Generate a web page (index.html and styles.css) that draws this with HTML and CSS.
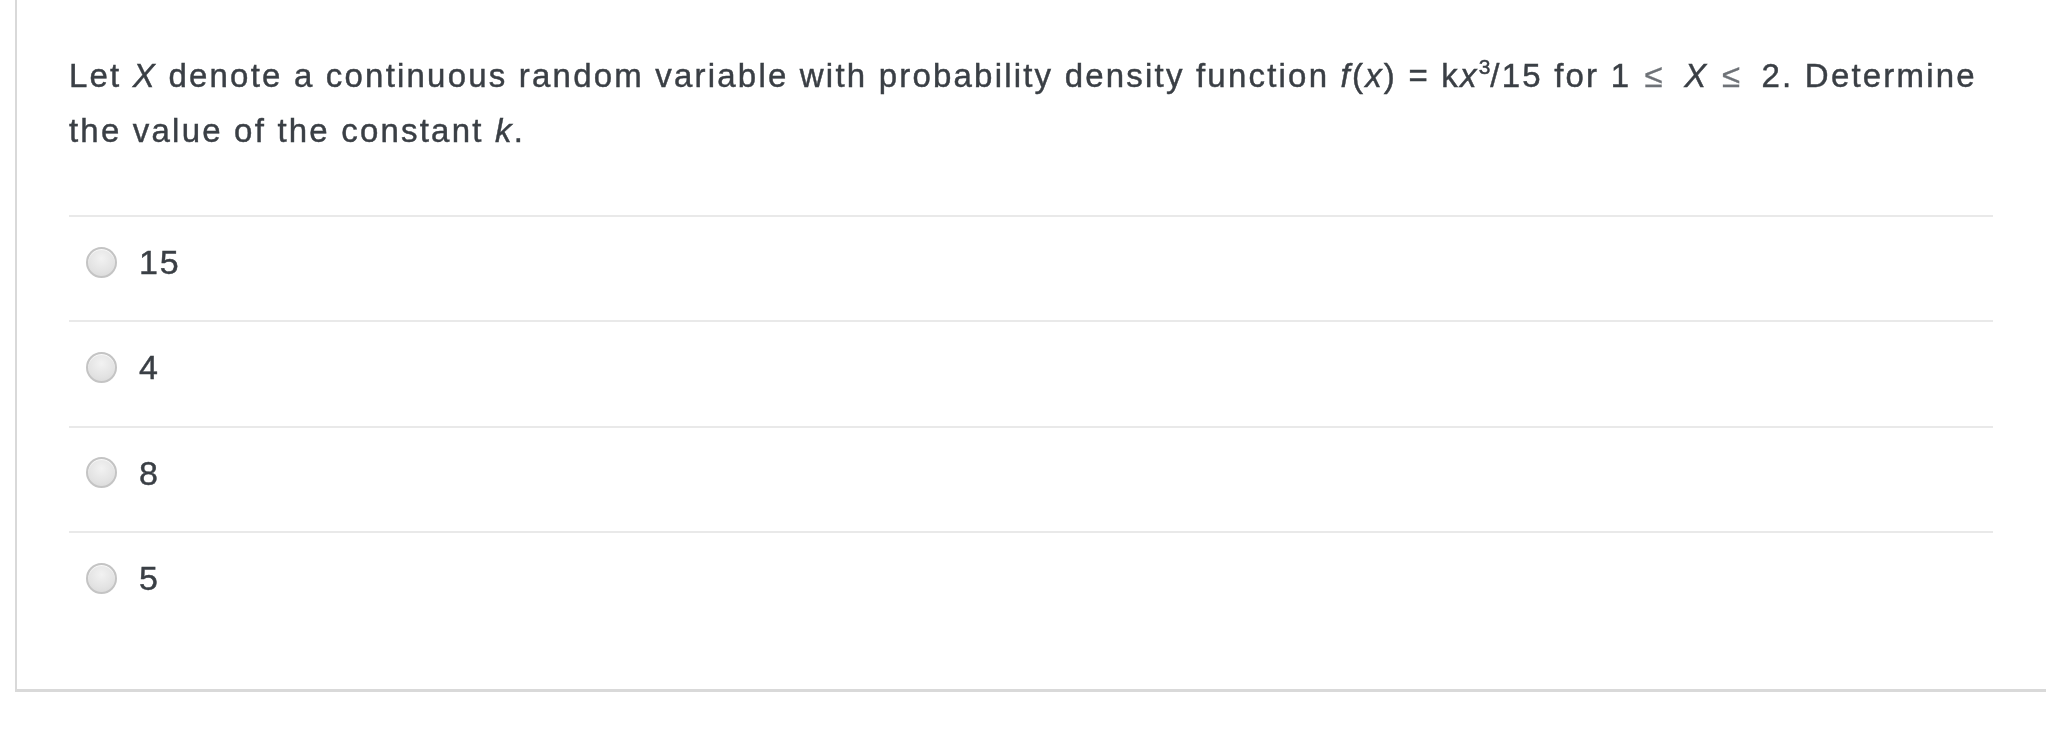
FILE: index.html
```html
<!DOCTYPE html>
<html lang="en">
<head>
<meta charset="utf-8">
<title>Question</title>
<link rel="stylesheet" href="styles.css">
</head>
<body>
<div class="card">
  <p class="question">Let <i>X</i> denote a continuous random variable with probability density function <i>f</i>(<i>x</i>) = k<i>x</i><sup>3</sup>/15 for 1 <span class="le">≤</span> <i>X</i> <span class="le">≤</span> 2. Determine the value of the constant <i>k</i>.</p>
  <ul class="options">
    <li class="option"><span class="radio"></span><span class="label">15</span></li>
    <li class="option"><span class="radio"></span><span class="label">4</span></li>
    <li class="option"><span class="radio"></span><span class="label">8</span></li>
    <li class="option"><span class="radio"></span><span class="label">5</span></li>
  </ul>
</div>
</body>
</html>
```
FILE: styles.css
```css
html, body {
  margin: 0;
  padding: 0;
  background: #ffffff;
}

body {
  font-family: "Liberation Sans", Arial, sans-serif;
  color: #3a3f45;
}

.card {
  margin-left: 15px;
  border-left: 2px solid #d9d9d9;
  border-bottom: 3px solid #d9d9d9;
  padding: 48px 53px 52px 52px;
  filter: blur(0.7px);
}

.question {
  margin: 0 0 57px 0;
  font-size: 33px;
  line-height: 55px;
  letter-spacing: 2.2px;
  -webkit-text-stroke: 0.45px #3a3f45;
}

.question sup {
  font-size: 21px;
  line-height: 0;
  vertical-align: 13px;
  letter-spacing: 0;
}

.le {
  color: #6e7277;
  -webkit-text-stroke: 0.3px #6e7277;
  margin: 0 8px 0 2px;
}

.options {
  list-style: none;
  margin: 0;
  padding: 0;
}

.option {
  display: flex;
  align-items: center;
  box-sizing: content-box;
  height: 90px;
  padding: 0 0 13.4px 17px;
  border-top: 2px solid #e9e9e9;
}

.radio {
  flex: none;
  width: 27px;
  height: 27px;
  border-radius: 50%;
  border: 2px solid #c4c4c4;
  background: radial-gradient(circle at 50% 35%, #f2f2f2 0%, #e3e3e3 60%, #d6d6d6 100%);
  box-shadow: inset 0 1px 1px rgba(255,255,255,0.8);
  margin-right: 22px;
}

.label {
  font-size: 34px;
  line-height: 34px;
  letter-spacing: 1.8px;
  -webkit-text-stroke: 0.45px #3a3f45;
}
```
